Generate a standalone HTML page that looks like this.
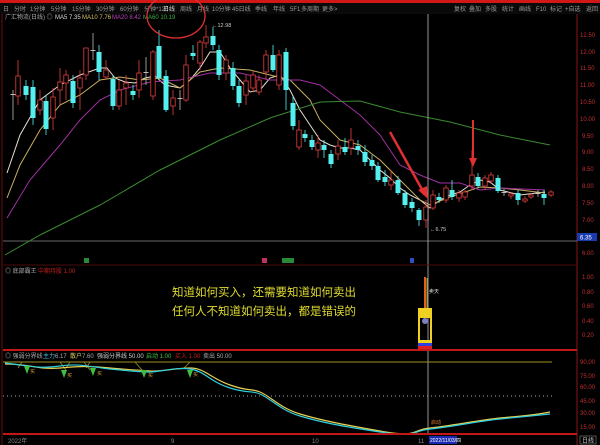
<!DOCTYPE html>
<html><head><meta charset="utf-8">
<style>
html,body{margin:0;padding:0;background:#000;width:600px;height:445px;overflow:hidden}
svg{display:block}
text{font-family:"Liberation Sans","Noto Sans CJK SC",sans-serif}
</style></head><body>
<svg id="s" width="600" height="445" viewBox="0 0 600 445" xmlns="http://www.w3.org/2000/svg">
<rect width="600" height="445" fill="#000"/>
<rect x="0" y="0" width="600" height="3" fill="#d01818"/>
<rect x="0" y="3" width="600" height="11" fill="#0a0a0a"/>
<g font-size="6" fill="#9a9a9a">
<text x="3" y="11">日</text><text x="14" y="11">分时</text><text x="30" y="11">1分钟</text><text x="51" y="11">5分钟</text><text x="72" y="11">15分钟</text><text x="96" y="11">30分钟</text><text x="120" y="11">60分钟</text><text x="144" y="11">分钟*120</text>
<text x="163" y="11" fill="#ddd">日线</text><text x="180" y="11">周线</text><text x="197" y="11">月线</text><text x="212" y="11">10分钟</text><text x="232" y="11">45日线</text><text x="255" y="11">季线</text><text x="273" y="11">年线</text><text x="290" y="11">5F1</text><text x="301" y="11">多周期</text><text x="322" y="11">更多&gt;</text>
<text x="454" y="11">复权</text><text x="469" y="11">叠加</text><text x="485" y="11">多股</text><text x="502" y="11">统计</text><text x="519" y="11">画线</text><text x="536" y="11">F10</text><text x="550" y="11">标记</text><text x="565" y="11">+自选</text><text x="586" y="11">返回</text>
</g>
<line x1="2" y1="14" x2="2" y2="445" stroke="#6a1010"/>
<line x1="577" y1="14" x2="577" y2="445" stroke="#8a1515"/>
<g font-size="6">
<text x="5" y="19" fill="#aaa">广汇物流(日线) ◎</text><text x="55" y="19" fill="#ddd">MA5 7.35</text><text x="82" y="19" fill="#d8c060">MA10 7.76</text><text x="112" y="19" fill="#c040c0">MA20 8.42</text><text x="143" y="19" fill="#40b040">MA60 10.19</text>
</g>
<g font-size="6" fill="#c03030">
<text x="580" y="37">12.50</text><text x="580" y="54">12.00</text><text x="580" y="70">11.50</text><text x="580" y="87">11.00</text><text x="580" y="104">10.50</text><text x="580" y="121">10.00</text><text x="582" y="138">9.50</text><text x="582" y="154">9.00</text><text x="582" y="171">8.50</text><text x="582" y="188">8.00</text><text x="582" y="205">7.50</text><text x="582" y="222">7.00</text><text x="582" y="255">6.00</text>
</g>
<rect x="577" y="233" width="20" height="8" fill="#1a3ab0"/><text x="580" y="239.5" font-size="6" fill="#fff">6.35</text>
<line x1="3" y1="241" x2="577" y2="241" stroke="#888" stroke-width="0.8"/>
<g id="ma" fill="none" stroke-width="1"></g>
<g id="c"></g>
<line x1="428" y1="14" x2="428" y2="434" stroke="#bbb" stroke-width="0.8"/>
<text x="212" y="27" font-size="5.5" fill="#ccc">←12.98</text>
<text x="430" y="231" font-size="5.5" fill="#ccc">←6.75</text>
<ellipse cx="176" cy="16" rx="29" ry="22" fill="none" stroke="#e03030" stroke-width="1.3"/>
<path d="M390 132 L424 193" stroke="#e03030" stroke-width="2.5"/><path d="M418 190 L428 199 L427 186 Z" fill="#e03030"/>
<path d="M473 120 L473 160" stroke="#e03030" stroke-width="2"/><path d="M469 158 L473 167 L477 158 Z" fill="#e03030"/>
<rect x="84" y="258" width="5" height="5" fill="#2a8a3a"/><rect x="262" y="258" width="5" height="5" fill="#c03060"/><rect x="282" y="258" width="12" height="5" fill="#2a8a3a"/><rect x="410" y="258" width="4" height="5" fill="#3050c0"/>
<line x1="3" y1="265" x2="577" y2="265" stroke="#4a0a0a"/>
<text x="5" y="273" font-size="6" fill="#aaa">◎ 底部霸王</text><text x="38" y="273" font-size="6" fill="#c02020">中期持股 1.00</text>
<g font-size="6" fill="#c03030"><text x="582" y="279">1.00</text><text x="582" y="294">0.80</text><text x="582" y="308">0.60</text><text x="582" y="323">0.40</text><text x="582" y="337">0.20</text></g>
<text x="264" y="296" font-size="11.5" fill="#e0dc30" text-anchor="middle">知道如何买入，还需要知道如何卖出</text>
<text x="264" y="315" font-size="11.5" fill="#e0dc30" text-anchor="middle">任何人不知道如何卖出，都是错误的</text>
<line x1="425" y1="277" x2="425" y2="310" stroke="#e06020" stroke-width="2"/>
<line x1="427" y1="278" x2="427" y2="308" stroke="#f0d040" stroke-width="0.8"/>
<text x="429" y="293" font-size="5" fill="#ddd">卖天</text>
<rect x="419" y="309" width="12" height="32" fill="none" stroke="#f0d020" stroke-width="2"/>
<rect x="420" y="310" width="10" height="8" fill="#f0d020"/>
<circle cx="425" cy="321" r="3" fill="#8080c0"/>
<rect x="418" y="340" width="14" height="3" fill="#f0d020"/>
<rect x="418" y="343" width="14" height="3" fill="#3040e0"/>
<rect x="418" y="346" width="14" height="3" fill="#e02020"/>
<rect x="3" y="349" width="574" height="2" fill="#c01818"/>
<g font-size="6"><text x="5" y="358" fill="#aaa">◎ 强弱分界线</text><text x="43" y="358" fill="#40c0e0">主力</text><text x="55" y="358" fill="#aaa">6.17</text><text x="70" y="358" fill="#e0d060">散户</text><text x="82" y="358" fill="#aaa">7.60</text><text x="97" y="358" fill="#ccc">强弱分界线 50.00</text><text x="146" y="358" fill="#40c040">启动 1.00</text><text x="175" y="358" fill="#c02020">买入 1.00</text><text x="203" y="358" fill="#aaa">卖出 50.00</text></g>
<line x1="3" y1="362" x2="552" y2="362" stroke="#a09020" stroke-width="1"/>
<line x1="3" y1="396" x2="552" y2="396" stroke="#aaa" stroke-width="1" stroke-dasharray="1,3"/>
<g font-size="6" fill="#c03030"><text x="580" y="364">90.00</text><text x="580" y="378">75.00</text><text x="580" y="389">60.00</text><text x="580" y="403">45.00</text><text x="580" y="415">30.00</text><text x="580" y="429">15.00</text></g>
<g fill="none" stroke="#a09020" stroke-width="0.8">
<path d="M18 368 L22 362 L60 362 L66 370"/><path d="M66 368 L70 362 L84 362 L90 370"/><path d="M86 368 L90 362 L135 362 L142 370"/><path d="M184 368 L190 362 L230 362"/>
</g>
<path fill="none" stroke="#e8d050" stroke-width="1.2" d="M5 364 C30 364 40 370 60 368 S90 366 110 368 S140 370 150 371 S175 368 190 368 S210 378 230 385 S250 388 260 392 S280 408 300 414 S340 424 380 431 S410 430 430 428 S480 420 500 418 S530 416 550 412"/>
<path fill="none" stroke="#30d0e0" stroke-width="1.2" d="M5 363 C30 366 40 369 60 366 S90 367 110 369 S140 372 150 372 S175 367 190 369 S210 382 230 388 S250 390 260 394 S280 410 300 416 S340 426 380 432 S410 431 430 429 S480 421 500 419 S530 416 550 414"/>
<g fill="#40c040"><path d="M24 366 L30 366 L27 374Z"/><path d="M61 370 L67 370 L64 378Z"/><path d="M90 368 L96 368 L93 376Z"/><path d="M141 370 L147 370 L144 378Z"/><path d="M187 370 L193 370 L190 378Z"/></g>
<g font-size="5" fill="#d0a030"><text x="30" y="373">买</text><text x="67" y="377">买</text><text x="97" y="375">买</text><text x="148" y="377">买</text><text x="193" y="376">买</text><text x="431" y="424" fill="#e08030">启动</text></g>
<rect x="3" y="433" width="574" height="2" fill="#c01818"/>
<g font-size="6" fill="#888"><text x="8" y="443">2022年</text><text x="171" y="443">9</text><text x="312" y="443">10</text><text x="418" y="443">11</text></g>
<rect x="429" y="436" width="28" height="8" fill="#1a2ab0"/><text x="430" y="442" font-size="5" fill="#fff">2022/11/03/四</text>
<rect x="580" y="436" width="16" height="8" fill="none" stroke="#888" stroke-width="0.6"/><text x="582" y="442.5" font-size="6" fill="#ccc">日线</text>
</svg>
<script>
var NS="http://www.w3.org/2000/svg";
function el(p,t,a){var e=document.createElementNS(NS,t);for(var k in a)e.setAttribute(k,a[k]);p.appendChild(e);return e;}
var C=[[13,'g',94,96,90,120],[18,'r',76,96,60,105],[26,'c',86,95,80,100],[33,'c',87,118,80,125],[40,'r',100,110,90,115],[46,'c',101,129,95,135],[53,'r',97,118,88,130],[60,'r',82,90,68,105],[66,'r',75,83,70,100],[73,'c',81,103,75,108],[80,'r',78,88,70,110],[86,'r',48,75,48,80],[93,'g',50,54,33,60],[99,'c',52,72,45,80],[106,'r',70,77,60,80],[113,'c',79,106,75,110],[119,'r',90,106,80,110],[126,'r',83,88,75,105],[133,'c',91,95,85,100],[139,'r',73,90,60,98],[146,'g',72,74,57,85],[153,'r',52,96,50,100],[159,'c',46,78,30,80],[166,'c',76,110,70,112],[173,'r',98,106,90,115],[180,'g',98,100,90,110],[186,'r',65,100,55,102],[193,'c',53,56,45,60],[200,'r',42,63,40,70],[206,'r',37,43,25,48],[213,'c',36,45,27,50],[219,'c',50,75,45,80],[226,'r',60,73,55,80],[233,'c',68,86,62,90],[239,'c',86,103,80,107],[246,'r',81,95,75,105],[253,'r',75,88,70,92],[259,'r',80,92,75,95],[266,'r',55,72,50,80],[273,'c',55,70,45,72],[279,'r',55,85,50,90],[286,'c',52,90,48,110],[293,'c',103,126,95,130],[299,'r',130,147,120,150],[305,'c',134,138,130,142],[312,'c',140,147,135,150],[318,'r',143,150,135,158],[324,'c',145,150,140,158],[331,'c',154,164,150,168],[338,'r',146,154,140,160],[345,'c',147,152,138,155],[351,'r',140,148,128,155],[358,'c',146,150,140,155],[365,'c',152,162,145,166],[372,'c',160,166,155,170],[378,'c',166,180,162,182],[385,'c',177,182,170,186],[391,'r',180,185,170,190],[398,'c',180,193,176,195],[405,'c',193,205,190,208],[412,'c',202,208,198,212],[419,'c',210,220,208,226],[426,'r',207,220,200,228],[433,'r',195,208,190,210],[439,'c',197,200,193,203],[446,'r',188,200,185,203],[452,'c',190,197,180,200],[459,'r',193,198,190,202],[465,'r',192,197,190,200],[472,'r',175,186,150,190],[478,'c',177,186,173,188],[485,'r',178,186,175,190],[491,'r',175,181,172,184],[498,'c',178,191,175,193],[504,'g',192,193,189,196],[511,'r',194,196,192,199],[518,'c',193,200,190,205],[525,'r',199,201,196,203],[531,'r',195,197,193,199],[538,'g',193,195,190,197],[544,'c',194,198,190,205],[551,'r',192,195,190,197]];
var g=document.getElementById('c');
C.forEach(function(d){var x=d[0],col=d[1]=='c'?'#54f0f0':d[1]=='r'?'#e04040':'#bbb';
el(g,'line',{x1:x,y1:d[4],x2:x,y2:d[5],stroke:col,'stroke-width':0.8});
var h=Math.max(1,d[3]-d[2]);
if(d[1]=='c')el(g,'rect',{x:x-2.5,y:d[2],width:5,height:h,fill:col});
else if(d[1]=='r')el(g,'rect',{x:x-2.2,y:d[2],width:4.4,height:h,fill:'#000',stroke:col,'stroke-width':0.8});
else el(g,'rect',{x:x-2.5,y:d[2],width:5,height:1,fill:col});});
var M={'#e8e0d0':[[7,173],[20,135],[40,100],[60,85],[80,75],[100,68],[107,68],[115,78],[125,82],[135,83],[145,78],[155,76],[165,85],[180,88],[190,80],[200,68],[210,52],[220,52],[230,68],[240,80],[250,92],[260,90],[270,78],[280,75],[290,90],[300,110],[310,125],[320,140],[330,145],[340,148],[350,148],[360,150],[370,160],[380,170],[390,178],[400,188],[410,195],[420,200],[430,208],[440,200],[450,195],[460,192],[470,185],[480,180],[490,182],[500,190],[520,195],[545,192]],
'#c8b060':[[7,198],[20,165],[40,130],[60,105],[80,95],[100,80],[120,77],[140,80],[160,78],[180,88],[200,72],[220,68],[250,70],[270,75],[290,80],[300,90],[310,100],[320,120],[340,140],[360,145],[380,160],[400,180],[420,200],[430,205],[450,197],[480,187],[500,188],[520,190],[545,193]],
'#a030a0':[[7,218],[30,180],[60,145],[80,120],[100,100],[120,90],[150,82],[180,80],[210,73],[240,73],[270,80],[300,80],[320,85],[340,100],[360,115],[380,135],[400,165],[420,175],[440,183],[460,183],[480,190],[500,188],[545,190]],
'#3a8a30':[[5,255],[40,235],[100,205],[160,170],[220,140],[270,118],[320,102],[360,101],[400,112],[450,122],[500,135],[550,145]]};
var mg=document.getElementById('ma');
for(var k in M){el(mg,'polyline',{points:M[k].map(function(p){return p.join(',')}).join(' '),stroke:k});}
</script>
</body></html>
